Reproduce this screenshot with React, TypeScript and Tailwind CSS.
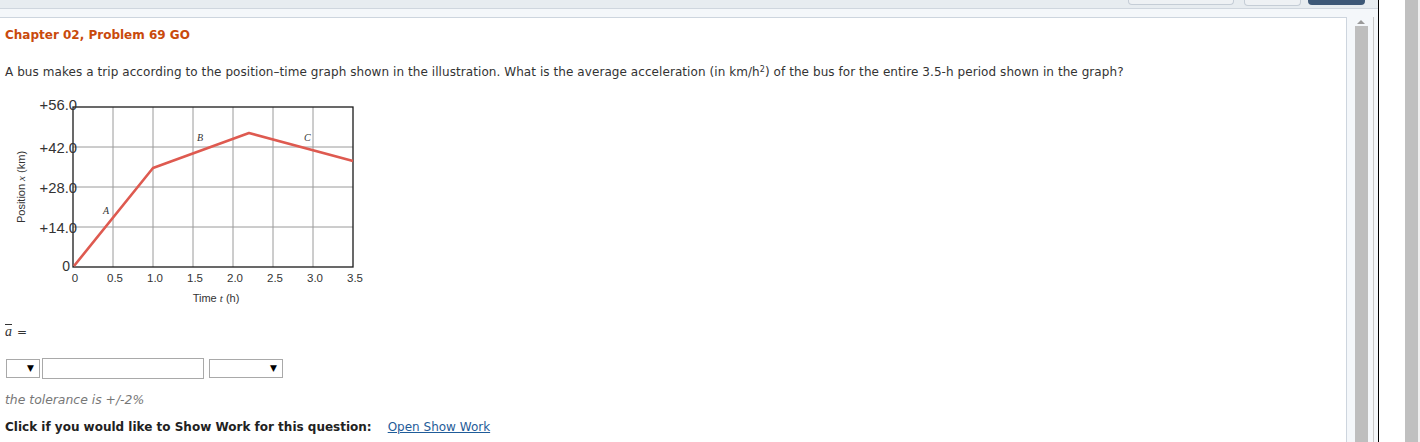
import React from "react";

function Chart() {
  const xs = [113, 153, 193, 233, 273, 313];
  const ys = [147, 187, 227];
  const yLabels = [
    { y: 109, t: "+56.0" },
    { y: 152, t: "+42.0" },
    { y: 192, t: "+28.0" },
    { y: 232, t: "+14.0" },
  ];
  const xLabels = ["0", "0.5", "1.0", "1.5", "2.0", "2.5", "3.0", "3.5"];
  return (
    <svg width="390" height="222" viewBox="0 90 390 222" className="block">
      <rect x="0" y="90" width="390" height="222" fill="#ffffff" />
      {xs.map((x) => (
        <line key={x} x1={x} y1={107} x2={x} y2={267} stroke="#9a9a9a" strokeWidth="1" />
      ))}
      {ys.map((y) => (
        <line key={y} x1={73} y1={y} x2={353} y2={y} stroke="#9a9a9a" strokeWidth="1" />
      ))}
      <rect x="73" y="107" width="280" height="160" fill="none" stroke="#1a1a1a" strokeWidth="1.3" />
      <polyline
        points="74,266 153,168 249,133 353,161"
        fill="none"
        stroke="#de5a50"
        strokeWidth="2.6"
        strokeLinejoin="round"
      />
      <g fontFamily="'Liberation Sans', Arial, sans-serif" fill="#333333">
        {yLabels.map((l) => (
          <text key={l.t} x="77" y={l.y + 1} fontSize="14.8" textAnchor="end">
            {l.t}
          </text>
        ))}
        <text x="70" y="271" fontSize="14" textAnchor="end">0</text>
        {xLabels.map((t, i) => (
          <text key={t} x={75 + i * 40} y="282" fontSize="11.5" textAnchor="middle">
            {t}
          </text>
        ))}
        <text x="216" y="302" fontSize="11" textAnchor="middle">
          Time <tspan fontFamily="'Liberation Serif', serif" fontStyle="italic">t</tspan> (h)
        </text>
        <text
          x="0"
          y="0"
          fontSize="11"
          textAnchor="middle"
          transform="translate(25 187) rotate(-90)"
        >
          Position <tspan fontFamily="'Liberation Serif', serif" fontStyle="italic">x</tspan> (km)
        </text>
      </g>
      <g fontFamily="'Liberation Serif', serif" fontStyle="italic" fontSize="10" fill="#333333">
        <text x="103" y="214">A</text>
        <text x="197" y="141">B</text>
        <text x="304" y="141">C</text>
      </g>
    </svg>
  );
}

function SelectBox({ w }: { w: string }) {
  return (
    <div className={`${w} h-[19px] border border-[#a9a9a9] bg-white flex items-center justify-end pr-[5px]`}>
      <span className="text-[9px] leading-none text-black">▼</span>
    </div>
  );
}

export default function App() {
  return (
    <div className="w-[1420px] h-[442px] overflow-hidden bg-white flex font-['DejaVu_Sans',Verdana,sans-serif]">
      <div className="w-[1378px] flex flex-col">
        {/* top toolbar strip */}
        <div className="h-[9px] bg-[#e7ecf0] border-b border-[#cfd6de] flex justify-end items-start pr-[13px]">
          <div className="w-[106px] h-[5px] bg-[#eef1f4] border border-t-0 border-[#c5cdd6] rounded-b-[4px]" />
          <div className="w-[57px] h-[6px] ml-[10px] bg-[#eef1f4] border border-t-0 border-[#c5cdd6] rounded-b-[4px]" />
          <div className="w-[57px] h-[5px] ml-[7px] bg-[#3d5877] rounded-b-[4px]" />
        </div>
        <div className="flex-1 bg-[#f4f7fa] pt-[8px] flex">
          <div className="w-[1347px] bg-white border-t border-r border-[#cdd5de] pl-[5px] pt-[9px] text-[12px]">
            <div className="text-[#c94a0c] font-bold text-[12px] leading-[16px]">Chapter 02, Problem 69 GO</div>
            <div className="mt-[21px] text-[#333333] text-[12px] leading-[16px] tracking-[0.07px]">
              A bus makes a trip according to the position–time graph shown in the illustration. What is the average acceleration (in km/h
              <sup className="text-[8px]">2</sup>) of the bus for the entire 3.5-h period shown in the graph?
            </div>
            <div className="mt-[10px] -ml-[5px]">
              <Chart />
            </div>
            <div className="mt-[12px] text-[#333333] text-[12px] leading-[16px] flex items-baseline">
              <span className="font-['Liberation_Serif',serif] italic text-[14px] border-t border-[#333] leading-[13px] pt-0">a</span>
              <span className="ml-[5px]">=</span>
            </div>
            <div className="mt-[18px] flex items-center">
              <div className="ml-[1px]">
                <SelectBox w="w-[34px]" />
              </div>
              <div className="ml-[2px] w-[162px] h-[21px] border border-[#a9a9a9] bg-white" />
              <div className="ml-[5px]">
                <SelectBox w="w-[74px]" />
              </div>
            </div>
            <div className="mt-[13px] text-[#777777] italic text-[12.4px] leading-[16px]">the tolerance is +/-2%</div>
            <div className="mt-[11px] text-[12px] leading-[16px] flex">
              <span className="font-bold text-[#222222]">Click if you would like to Show Work for this question:</span>
              <span className="ml-[16px] text-[#1f5c99] underline">Open Show Work</span>
            </div>
          </div>
          {/* scrollbar column */}
          <div className="w-[26px] flex flex-col items-center pl-[2px]">
            <div className="h-[9px] flex items-center">
              <div className="w-0 h-0 border-l-[4px] border-r-[4px] border-b-[4px] border-l-transparent border-r-transparent border-b-[#9a9a9a]" />
            </div>
            <div className="w-[13px] flex-1 bg-[#bebebe]" />
          </div>
          <div className="w-[1px] bg-[#c8c8c8]" />
          <div className="w-[4px]" />
        </div>
      </div>
      <div className="w-[1px] bg-black" />
      <div className="w-[26px] bg-white" />
      <div className="w-[13px] bg-[#c0c0c0]" />
      <div className="flex-1 bg-[#f0f0f0]" />
    </div>
  );
}
